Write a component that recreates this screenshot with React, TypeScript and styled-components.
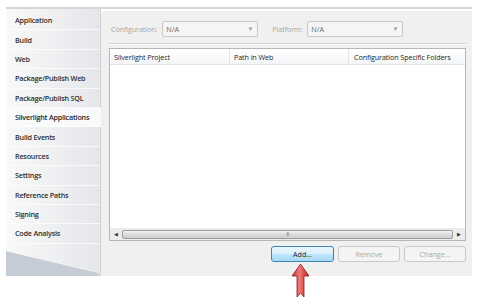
import * as React from "react"
import styled, {createGlobalStyle, css} from "styled-components"

const GlobalStyle = createGlobalStyle`
  html, body {
    margin: 0;
    background: #ffffff;
  }
  body {
    font-family: "Open Sans", "Noto Sans", sans-serif;
    width: 480px;
    height: 305px;
    overflow: hidden;
  }
`

const Page = styled.div`
  position: relative;
  width: 480px;
  height: 305px;
`

const Frame = styled.div`
  position: absolute;
  left: 6px;
  top: 7px;
  width: 466px;
  height: 269px;
  box-sizing: border-box;
  border-top: 2px solid #d6d6d6;
  display: flex;
`

const Sidebar = styled.div`
  width: 94px;
  display: flex;
  flex-direction: column;
  padding-top: 2px;
  background: linear-gradient(to right, #f9f9f9, #e4e6ea);
  border-right: 1px solid #cfd3da;
`

const NavItem = styled.div<{$active?: boolean}>`
  height: 19.4px;
  flex: none;
  box-sizing: border-box;
  display: flex;
  align-items: center;
  padding-left: 9px;
  font-size: 7.2px;
  font-weight: 600;
  letter-spacing: -0.2px;
  color: #2e2e2e;
  white-space: nowrap;
  border-bottom: 1px solid rgba(255, 255, 255, 0.7);
  ${p => p.$active && css`
    background: #f8fafc;
    margin-right: -1px;
    position: relative;
    z-index: 1;
    color: #1e1e1e;
  `}
`

const SideFooter = styled.div`
  flex: 1;
  position: relative;
  svg {
    position: absolute;
    inset: 0;
    width: 100%;
    height: 100%;
  }
`

const Main = styled.div`
  flex: 1;
  margin-top: 2px;
  background: #f0f0f0;
  border-top-left-radius: 4px;
  display: flex;
  flex-direction: column;
  padding: 10px 6px 0 8px;
`

const Toolbar = styled.div`
  display: flex;
  align-items: center;
  height: 16px;
  padding-left: 2px;
  font-size: 7.2px;
`

const Label = styled.span`
  color: #a6a6a6;
  margin-right: 5px;
  letter-spacing: -0.1px;
`

const Combo = styled.div<{$gap?: number}>`
  width: 96px;
  height: 16px;
  box-sizing: border-box;
  border: 1px solid #c8c8c8;
  border-radius: 2px;
  background: #f5f5f5;
  display: flex;
  align-items: center;
  justify-content: space-between;
  padding: 0 4px 0 3px;
  color: #6a6a6a;
  margin-right: ${p => p.$gap ?? 0}px;
`

const Arrow = styled.span`
  font-size: 6px;
  color: #9a9a9a;
`

const Separator = styled.div`
  height: 1px;
  margin-top: 6px;
  background: #d2d2d2;
  border-bottom: 1px solid #fbfbfb;
`

const ListBox = styled.div`
  margin-top: 3px;
  height: 193px;
  box-sizing: border-box;
  border: 1px solid #b7b7b7;
  background: #ffffff;
  display: flex;
  flex-direction: column;
`

const Header = styled.div`
  display: flex;
  height: 15px;
  border-bottom: 1px solid #e3e3e3;
  background: linear-gradient(#ffffff, #f4f5f6);
`

const HeaderCell = styled.div<{$w?: number}>`
  ${p => (p.$w ? css`width: ${p.$w}px;` : css`flex: 1;`)}
  box-sizing: border-box;
  padding-left: 4px;
  display: flex;
  align-items: center;
  font-size: 7.2px;
  letter-spacing: -0.1px;
  color: #1f1f1f;
  border-right: 1px solid #e4e4e4;
  &:last-child { border-right: none; padding-left: 5px; }
`

const ListBody = styled.div`
  flex: 1;
`

const ScrollBar = styled.div`
  height: 12px;
  display: flex;
  align-items: center;
  background: #ececec;
  padding: 0 1px;
  gap: 1px;
`

const ScrollArrow = styled.div`
  width: 10px;
  height: 10px;
  display: flex;
  align-items: center;
  justify-content: center;
  font-size: 5px;
  color: #333;
`

const Thumb = styled.div`
  flex: 1;
  height: 9px;
  box-sizing: border-box;
  border: 1px solid #9c9c9c;
  border-radius: 2px;
  background: linear-gradient(#f3f3f3, #d9d9d9 55%, #cfcfcf);
  display: flex;
  align-items: center;
  justify-content: center;
  font-size: 5px;
  color: #777;
  letter-spacing: -0.5px;
`

const Buttons = styled.div`
  display: flex;
  justify-content: flex-end;
  gap: 4px;
  margin-top: 5px;
`

const Button = styled.div<{$primary?: boolean}>`
  width: 62px;
  height: 16px;
  box-sizing: border-box;
  border-radius: 3px;
  display: flex;
  align-items: center;
  justify-content: center;
  font-size: 7.2px;
  ${p => p.$primary ? css`
    width: 63px;
    border: 1px solid #3f81b3;
    background: linear-gradient(#eaf6fd, #d9f0fc 50%, #bee6fd 51%, #a7d9f5);
    color: #1c1c1c;
  ` : css`
    border: 1px solid #c9c9c9;
    background: #f4f4f4;
    color: #a8a8a8;
  `}
`

const Pointer = styled.svg`
  position: absolute;
  left: 291px;
  top: 263px;
`

const navItems = [
  "Application",
  "Build",
  "Web",
  "Package/Publish Web",
  "Package/Publish SQL",
  "Silverlight Applications",
  "Build Events",
  "Resources",
  "Settings",
  "Reference Paths",
  "Signing",
  "Code Analysis",
]

const App = () => {
  return (
    <Page>
      <GlobalStyle />
      <Frame>
        <Sidebar>
          {navItems.map(item => (
            <NavItem key={item} $active={item === "Silverlight Applications"}>
              {item}
            </NavItem>
          ))}
          <SideFooter>
            <svg viewBox="0 0 94 33" preserveAspectRatio="none">
              <path d="M0 7 L88 28 Q94 30 94 33 L0 33 Z" fill="#c6ccd6" />
              <path d="M0 7 L88 28" stroke="#f6f7f9" strokeWidth="0.8" fill="none" />
            </svg>
          </SideFooter>
        </Sidebar>
        <Main>
          <Toolbar>
            <Label>Configuration:</Label>
            <Combo $gap={14}>
              <span>N/A</span>
              <Arrow>▼</Arrow>
            </Combo>
            <Label>Platform:</Label>
            <Combo>
              <span>N/A</span>
              <Arrow>▼</Arrow>
            </Combo>
          </Toolbar>
          <Separator />
          <ListBox>
            <Header>
              <HeaderCell $w={120}>Silverlight Project</HeaderCell>
              <HeaderCell $w={119}>Path in Web</HeaderCell>
              <HeaderCell>Configuration Specific Folders</HeaderCell>
            </Header>
            <ListBody />
            <ScrollBar>
              <ScrollArrow>◀</ScrollArrow>
              <Thumb>III</Thumb>
              <ScrollArrow>▶</ScrollArrow>
            </ScrollBar>
          </ListBox>
          <Buttons>
            <Button $primary>Add...</Button>
            <Button>Remove</Button>
            <Button>Change...</Button>
          </Buttons>
        </Main>
      </Frame>
      <Pointer width="19" height="36" viewBox="0 0 19 36">
        <defs>
          <linearGradient id="redArrow" x1="0" x2="1" y1="0" y2="0">
            <stop offset="0" stopColor="#c42a2a" />
            <stop offset="0.45" stopColor="#f07a7a" />
            <stop offset="1" stopColor="#b81f1f" />
          </linearGradient>
        </defs>
        <path
          d="M9.5 1 L18 13 L13 13 L13 34 L9.5 30 L6 34 L6 13 L1 13 Z"
          fill="url(#redArrow)"
          stroke="#8e1a1a"
          strokeWidth="0.8"
          strokeLinejoin="round"
        />
      </Pointer>
    </Page>
  )
}

export default App
